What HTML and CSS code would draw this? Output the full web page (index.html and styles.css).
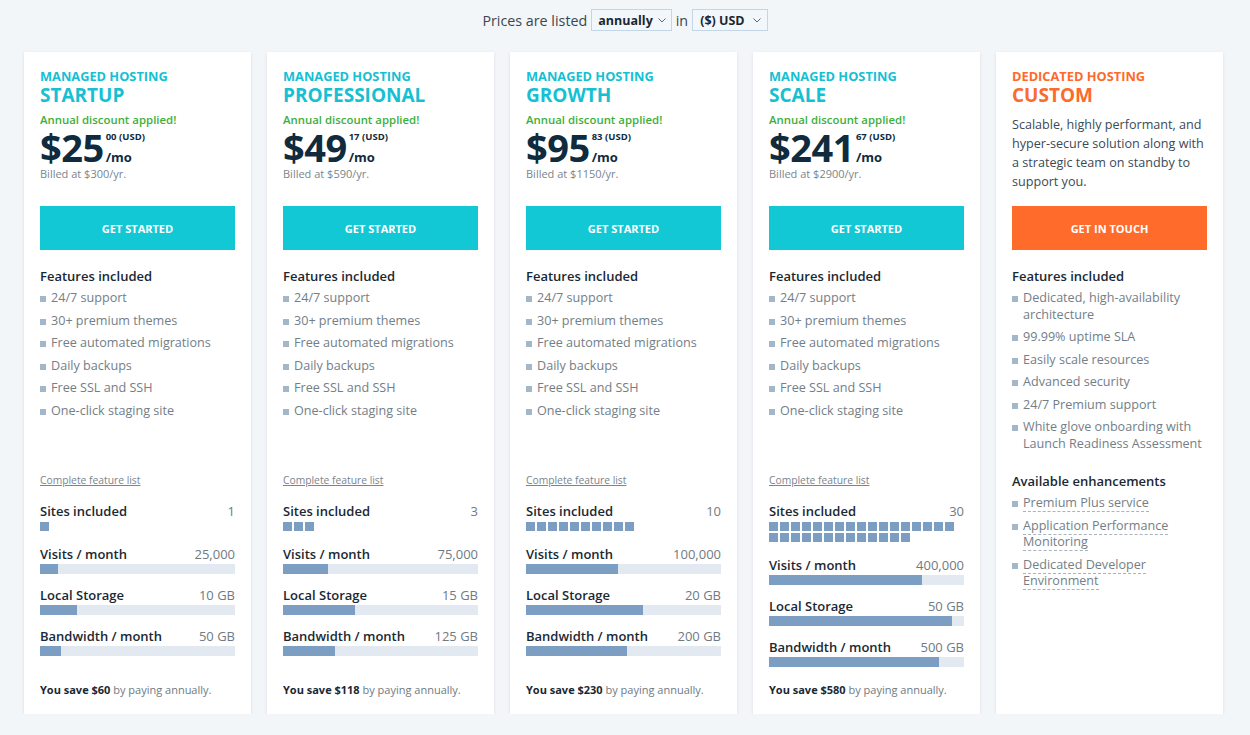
FILE: index.html
```html
<!DOCTYPE html>
<html lang="en">
<head>
<meta charset="utf-8">
<title>Pricing</title>
<link rel="stylesheet" href="styles.css">
</head>
<body>
<div class="topbar">
  <span>Prices are listed</span>
  <span class="pick">annually <svg class="chev" viewBox="0 0 8 5" width="8" height="5"><path d="M0.5 0.5 L4 4 L7.5 0.5" fill="none" stroke="#666" stroke-width="1"/></svg></span>
  <span>in</span>
  <span class="pick pick-usd">($) USD <svg class="chev" viewBox="0 0 8 5" width="8" height="5"><path d="M0.5 0.5 L4 4 L7.5 0.5" fill="none" stroke="#666" stroke-width="1"/></svg></span>
</div>

<main class="plans">
  <section class="card">
    <div class="eyebrow">MANAGED HOSTING</div>
    <div class="plan-name">STARTUP</div>
    <div class="discount">Annual discount applied!</div>
    <div class="price"><span class="amount">$25</span><span class="price-side"><span class="cents">00 (USD)</span><span class="per">/mo</span></span></div>
    <div class="billed">Billed at $300/yr.</div>
    <a class="btn">GET STARTED</a>
    <div class="features">
      <h4>Features included</h4>
      <ul class="list">
        <li>24/7 support</li><li>30+ premium themes</li><li>Free automated migrations</li><li>Daily backups</li><li>Free SSL and SSH</li><li>One-click staging site</li>
      </ul>
    </div>
    <a class="more">Complete feature list</a>
    <div class="stats">
      <div class="stat-row"><span class="stat-label">Sites included</span><span class="stat-val">1</span></div>
      <div class="squares"><i></i></div>
      <div class="stat-row gap"><span class="stat-label">Visits / month</span><span class="stat-val">25,000</span></div>
      <div class="bar"><div class="fill" style="width:9%"></div></div>
      <div class="stat-row gap2"><span class="stat-label">Local Storage</span><span class="stat-val">10 GB</span></div>
      <div class="bar"><div class="fill" style="width:19%"></div></div>
      <div class="stat-row gap2"><span class="stat-label">Bandwidth / month</span><span class="stat-val">50 GB</span></div>
      <div class="bar"><div class="fill" style="width:10.8%"></div></div>
    </div>
    <p class="save"><b>You save $60</b> by paying annually.</p>
  </section>

  <section class="card">
    <div class="eyebrow">MANAGED HOSTING</div>
    <div class="plan-name">PROFESSIONAL</div>
    <div class="discount">Annual discount applied!</div>
    <div class="price"><span class="amount">$49</span><span class="price-side"><span class="cents">17 (USD)</span><span class="per">/mo</span></span></div>
    <div class="billed">Billed at $590/yr.</div>
    <a class="btn">GET STARTED</a>
    <div class="features">
      <h4>Features included</h4>
      <ul class="list">
        <li>24/7 support</li><li>30+ premium themes</li><li>Free automated migrations</li><li>Daily backups</li><li>Free SSL and SSH</li><li>One-click staging site</li>
      </ul>
    </div>
    <a class="more">Complete feature list</a>
    <div class="stats">
      <div class="stat-row"><span class="stat-label">Sites included</span><span class="stat-val">3</span></div>
      <div class="squares"><i></i><i></i><i></i></div>
      <div class="stat-row gap"><span class="stat-label">Visits / month</span><span class="stat-val">75,000</span></div>
      <div class="bar"><div class="fill" style="width:23%"></div></div>
      <div class="stat-row gap2"><span class="stat-label">Local Storage</span><span class="stat-val">15 GB</span></div>
      <div class="bar"><div class="fill" style="width:37%"></div></div>
      <div class="stat-row gap2"><span class="stat-label">Bandwidth / month</span><span class="stat-val">125 GB</span></div>
      <div class="bar"><div class="fill" style="width:26.5%"></div></div>
    </div>
    <p class="save"><b>You save $118</b> by paying annually.</p>
  </section>

  <section class="card">
    <div class="eyebrow">MANAGED HOSTING</div>
    <div class="plan-name">GROWTH</div>
    <div class="discount">Annual discount applied!</div>
    <div class="price"><span class="amount">$95</span><span class="price-side"><span class="cents">83 (USD)</span><span class="per">/mo</span></span></div>
    <div class="billed">Billed at $1150/yr.</div>
    <a class="btn">GET STARTED</a>
    <div class="features">
      <h4>Features included</h4>
      <ul class="list">
        <li>24/7 support</li><li>30+ premium themes</li><li>Free automated migrations</li><li>Daily backups</li><li>Free SSL and SSH</li><li>One-click staging site</li>
      </ul>
    </div>
    <a class="more">Complete feature list</a>
    <div class="stats">
      <div class="stat-row"><span class="stat-label">Sites included</span><span class="stat-val">10</span></div>
      <div class="squares"><i></i><i></i><i></i><i></i><i></i><i></i><i></i><i></i><i></i><i></i></div>
      <div class="stat-row gap"><span class="stat-label">Visits / month</span><span class="stat-val">100,000</span></div>
      <div class="bar"><div class="fill" style="width:47%"></div></div>
      <div class="stat-row gap2"><span class="stat-label">Local Storage</span><span class="stat-val">20 GB</span></div>
      <div class="bar"><div class="fill" style="width:60%"></div></div>
      <div class="stat-row gap2"><span class="stat-label">Bandwidth / month</span><span class="stat-val">200 GB</span></div>
      <div class="bar"><div class="fill" style="width:52%"></div></div>
    </div>
    <p class="save"><b>You save $230</b> by paying annually.</p>
  </section>

  <section class="card">
    <div class="eyebrow">MANAGED HOSTING</div>
    <div class="plan-name">SCALE</div>
    <div class="discount">Annual discount applied!</div>
    <div class="price"><span class="amount">$241</span><span class="price-side"><span class="cents">67 (USD)</span><span class="per">/mo</span></span></div>
    <div class="billed">Billed at $2900/yr.</div>
    <a class="btn">GET STARTED</a>
    <div class="features">
      <h4>Features included</h4>
      <ul class="list">
        <li>24/7 support</li><li>30+ premium themes</li><li>Free automated migrations</li><li>Daily backups</li><li>Free SSL and SSH</li><li>One-click staging site</li>
      </ul>
    </div>
    <a class="more">Complete feature list</a>
    <div class="stats">
      <div class="stat-row"><span class="stat-label">Sites included</span><span class="stat-val">30</span></div>
      <div class="squares"><i></i><i></i><i></i><i></i><i></i><i></i><i></i><i></i><i></i><i></i><i></i><i></i><i></i><i></i><i></i><i></i><i></i><i></i><i></i><i></i><i></i><i></i><i></i><i></i><i></i><i></i><i></i><i></i><i></i><i></i></div>
      <div class="stat-row gap"><span class="stat-label">Visits / month</span><span class="stat-val">400,000</span></div>
      <div class="bar"><div class="fill" style="width:78.6%"></div></div>
      <div class="stat-row gap2"><span class="stat-label">Local Storage</span><span class="stat-val">50 GB</span></div>
      <div class="bar"><div class="fill" style="width:94%"></div></div>
      <div class="stat-row gap2"><span class="stat-label">Bandwidth / month</span><span class="stat-val">500 GB</span></div>
      <div class="bar"><div class="fill" style="width:87%"></div></div>
    </div>
    <p class="save"><b>You save $580</b> by paying annually.</p>
  </section>

  <section class="card card-custom">
    <div class="eyebrow">DEDICATED HOSTING</div>
    <div class="plan-name">CUSTOM</div>
    <p class="desc">Scalable, highly performant, and hyper-secure solution along with a strategic team on standby to support you.</p>
    <a class="btn btn-orange">GET IN TOUCH</a>
    <div class="features features-custom">
      <h4>Features included</h4>
      <ul class="list">
        <li>Dedicated, high-availability architecture</li><li>99.99% uptime SLA</li><li>Easily scale resources</li><li>Advanced security</li><li>24/7 Premium support</li><li>White glove onboarding with Launch Readiness Assessment</li>
      </ul>
    </div>
    <div class="enhance">
      <h4>Available enhancements</h4>
      <ul class="list list-dashed">
        <li><span>Premium Plus service</span></li>
        <li><span>Application Performance Monitoring</span></li>
        <li><span>Dedicated Developer Environment</span></li>
      </ul>
    </div>
  </section>
</main>
</body>
</html>
```

FILE: styles.css
```css
* { box-sizing: border-box; }

body {
  margin: 0;
  background: #f3f6f9;
  font-family: "Open Sans", "Noto Sans", sans-serif;
  color: #1b2d3b;
}

.topbar {
  height: 40px;
  display: flex;
  align-items: center;
  justify-content: center;
  gap: 4px;
  font-size: 14.3px;
  color: #3a4650;
}

.pick {
  display: inline-flex;
  align-items: center;
  gap: 5px;
  height: 22px;
  padding: 0 5px 0 6px;
  border: 1px solid #c3d6e8;
  background: #f2f7fc;
  font-size: 12.5px;
  font-weight: 700;
  color: #1c2730;
}
.pick-usd { padding: 0 6px 0 7px; gap: 8px; }
.chev { display: block; }

.plans {
  display: grid;
  grid-template-columns: repeat(5, 227px);
  gap: 16px;
  padding: 12px 24px 0 24px;
}

.card {
  background: #fff;
  box-shadow: 0 1px 3px rgba(30, 50, 70, 0.12);
  padding: 16px 16px 16px 16px;
  display: flex;
  flex-direction: column;
  height: 662px;
}

.eyebrow {
  font-size: 12.8px;
  line-height: 16px;
  font-weight: 700;
  color: #15c0d3;
}
.plan-name {
  font-size: 19px;
  line-height: 22px;
  font-weight: 700;
  color: #15c0d3;
}
.card-custom .eyebrow,
.card-custom .plan-name { color: #fd6a2b; }

.discount {
  margin-top: 6px;
  font-size: 11.4px;
  line-height: 16px;
  font-weight: 600;
  color: #3daf3b;
}

.price {
  display: flex;
  align-items: flex-start;
  color: #0f2b3d;
}
.amount {
  font-size: 38px;
  line-height: 38px;
  font-weight: 700;
  letter-spacing: -0.5px;
}
.price-side {
  display: flex;
  flex-direction: column;
  margin-left: 2px;
}
.cents {
  margin-top: 3px;
  font-size: 9.5px;
  line-height: 12px;
  font-weight: 700;
}
.per {
  margin-top: 6px;
  font-size: 13px;
  line-height: 16px;
  font-weight: 700;
}
.billed {
  margin-top: 1px;
  font-size: 11px;
  line-height: 14px;
  color: #7b858d;
}

.btn {
  display: flex;
  align-items: center;
  justify-content: center;
  margin-top: 25px;
  height: 44px;
  background: #13c8d5;
  color: #fff;
  font-size: 11px;
  font-weight: 700;
}
.btn-orange { background: #ff6b2b; margin-top: 15px; }

.desc {
  margin: 9px 0 0 0;
  font-size: 12.6px;
  line-height: 19px;
  color: #3b4a56;
}

.features {
  margin-top: 17px;
  min-height: 206px;
}
.features-custom { min-height: 0; }

h4 {
  margin: 0;
  font-size: 13px;
  line-height: 18px;
  font-weight: 600;
  color: #1a2833;
}

.list {
  list-style: none;
  margin: 2px 0 0 0;
  padding: 0;
}
.list li {
  position: relative;
  padding: 3px 0 3px 11px;
  font-size: 12.6px;
  line-height: 16.5px;
  color: #737e87;
}
.list li::before {
  content: "";
  position: absolute;
  left: 0;
  top: 9px;
  width: 6px;
  height: 6px;
  background: #a4b7c9;
}
.list-dashed li span {
  border-bottom: 1px dashed #a9b3bb;
}

.enhance { margin-top: 17px; }

.more {
  margin-top: 0;
  font-size: 10.3px;
  line-height: 14px;
  color: #7b858d;
  text-decoration: underline;
  align-self: flex-start;
}

.stats { margin-top: 15px; }

.stat-row {
  display: flex;
  justify-content: space-between;
  font-size: 13px;
  line-height: 18px;
}
.stat-row.gap { margin-top: 14px; }
.stat-row.gap2 { margin-top: 12px; }
.stat-label { font-weight: 600; color: #1a2833; }
.stat-val { color: #6f7a83; }

.squares {
  display: flex;
  flex-wrap: wrap;
  gap: 2px;
  margin-top: 2px;
}
.squares i {
  display: block;
  width: 9px;
  height: 9px;
  background: #7b9ec2;
}

.bar {
  margin-top: 1px;
  height: 10px;
  background: #e2e9f0;
}
.fill {
  height: 100%;
  background: #7b9ec2;
}

.save {
  margin: auto 0 0 0;
  padding-top: 14px;
  font-size: 11px;
  line-height: 16px;
  color: #6f7a83;
}
.save b { color: #1a2833; font-weight: 700; }
```
